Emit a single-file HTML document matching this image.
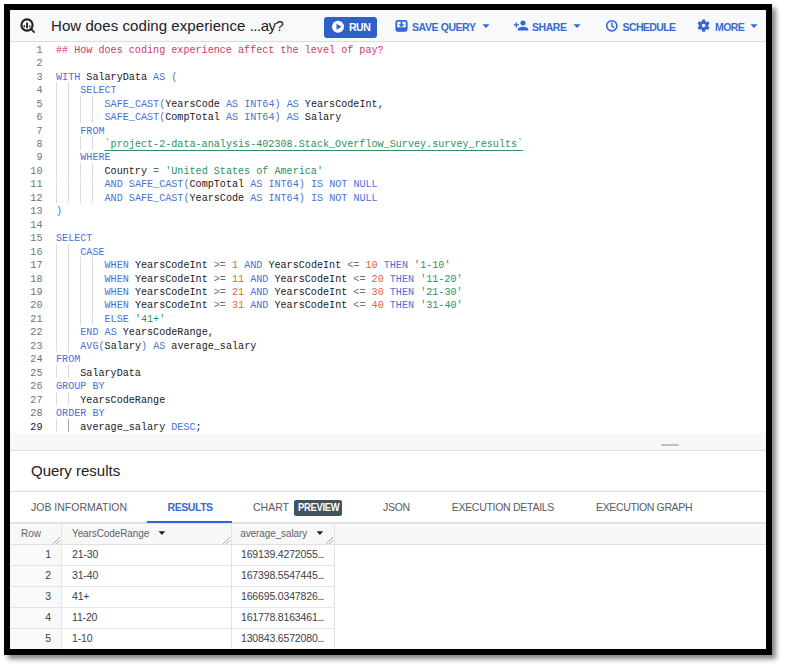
<!DOCTYPE html>
<html lang="en">
<head>
<meta charset="utf-8">
<title>How does coding experience affect the level of pay?</title>
<style>
*{box-sizing:border-box;margin:0;padding:0}
html,body{width:785px;height:668px;background:#fff;overflow:hidden}
body{position:relative;font-family:"Liberation Sans",sans-serif;color:#202124}
.frame{position:absolute;left:4px;top:4px;width:768px;height:651px;border:6px solid #000;background:transparent;z-index:10;box-shadow:4px 4px 5px rgba(0,0,0,.48)}
.abs{position:absolute}
.toolbar{left:10px;top:10px;width:756px;height:32px;background:#f8f9fa;border-bottom:1px solid #dadce0}
.title{left:51px;top:16px;font-size:15px;line-height:20px;color:#202124;white-space:nowrap;letter-spacing:-.05px}
.run{left:324px;top:17.3px;width:53.2px;height:20.4px;background:#2f60c8;border-radius:3px}
.tb{top:16.6px;height:20px;line-height:20px;font-size:10.5px;font-weight:bold;color:#3a69d2;white-space:nowrap;letter-spacing:-.1px}
.code{left:10px;top:42px;width:756px;height:391px;background:#fff;font-family:"Liberation Mono",monospace;font-size:10.12px;line-height:13.5px;color:#202124}
.ln{position:absolute;left:0;width:32.5px;text-align:right;color:#70757a;white-space:pre;height:13.5px}
.cl{position:absolute;left:46px;white-space:pre;height:13.5px}
.u{text-decoration:underline;text-underline-offset:2.6px;text-decoration-thickness:1px}
.k{color:#4a72d4}.c{color:#d2386a}.s{color:#2f8f62}.n{color:#e5604a}.p{color:#4a72d4}.o{color:#6a6e73}
.ln.act{color:#202124}
.g.act{background:#a0a4a8}
.g{position:absolute;width:1px;background:#dcdcdc}
.splitter{left:10px;top:433px;width:756px;height:18px;background:#f8f8f9;border-bottom:1px solid #dfe0e2}
.handle{left:661px;top:444px;width:18px;height:2px;background:#bdc1c6;border-radius:1px}
.qr{left:31px;top:461px;font-size:15px;line-height:20px;color:#202124;white-space:nowrap}
.tabs{left:10px;top:491px;width:756px;height:32px;border-top:1px solid #dadce0;border-bottom:1px solid #dadce0;background:#fff}
.tab{top:497px;height:20px;line-height:20px;font-size:10.5px;color:#565b60;white-space:nowrap}
.tab.on{color:#3a69d2;font-weight:bold}
.ul{left:147px;top:521.2px;width:84.5px;height:2px;background:#3367d6}
.badge{left:293.8px;top:499.5px;width:48.3px;height:16.2px;background:#42545f;border-radius:2px}
.badge span{position:absolute;left:4px;top:-1.9px;color:#fff;font-size:10px;font-weight:bold;line-height:20px;letter-spacing:-.3px;white-space:nowrap;transform:scaleX(.94);transform-origin:0 50%}
.thead{left:10px;top:523px;width:756px;height:22px;background:#f8f8f9;border-top:1px solid #e6e6e6;border-bottom:1px solid #e0e0e0}
.th{top:523.8px;height:20px;line-height:20px;font-size:10px;color:#5f6368;white-space:nowrap}
.cell{height:21px;line-height:20px;font-size:10.5px;color:#3c4043;white-space:nowrap;letter-spacing:-.16px}
.cell i{font-style:normal;letter-spacing:-1.05px}
.rowbg{left:10px;width:51px;height:21px;background:#f9f9fa}
.hl{left:10px;width:324px;height:1px;background:#e4e4e4}
.vl{width:1px;background:#e4e4e4}
</style>
</head>
<body>
<div class="abs toolbar"></div>
<svg class="abs" style="left:17px;top:15px" width="20" height="20" viewBox="0 0 20 20"><circle cx="10" cy="10" r="5.6" fill="none" stroke="#202124" stroke-width="2.1"/><path d="M14.2 14.2 L17.1 17.1" stroke="#202124" stroke-width="1.7" stroke-linecap="round"/><rect x="6.6" y="10" width="1.3" height="2.3" fill="#202124"/><rect x="9.1" y="7.6" width="1.9" height="5.6" fill="#202124"/><rect x="12.1" y="10.4" width="1.3" height="1.9" fill="#202124"/></svg>
<div class="abs title"><span style="letter-spacing:.07px">How does coding experience </span><span style="letter-spacing:-.5px">...ay?</span></div>
<div class="abs run"></div>
<svg class="abs" style="left:330px;top:19px" width="16" height="16" viewBox="0 0 16 16"><circle cx="8" cy="7.7" r="6" fill="#fff"/><path d="M6.5 4.7 L11.6 7.7 L6.5 10.7Z" fill="#2f60c8"/></svg>
<div class="abs tb" style="left:349px;color:#fff;letter-spacing:-.5px">RUN</div>
<svg class="abs" style="left:394px;top:18px" width="16" height="16" viewBox="0 0 16 16"><rect x="2.3" y="2.8" width="10.4" height="10" rx="1.5" fill="none" stroke="#3367d6" stroke-width="1.8"/><rect x="2.3" y="9.3" width="10.4" height="3.9" fill="#3367d6"/><path d="M6.6 3.6h1.8v2.6h2.1L7.5 9.2 4.5 6.2h2.1z" fill="#3367d6"/></svg>
<div class="abs tb" style="left:412px;letter-spacing:-.42px">SAVE QUERY</div>
<svg class="abs" style="left:482px;top:23.7px" width="8" height="5" viewBox="0 0 8 5"><path fill="#3367d6" d="M0.5 0.3h7L4 4z"/></svg>
<svg class="abs" style="left:513.3px;top:18.2px" width="16" height="15" viewBox="0 0 24 24" preserveAspectRatio="none"><path fill="#3367d6" d="M15 12c2.21 0 4-1.79 4-4s-1.79-4-4-4-4 1.79-4 4 1.79 4 4 4zm-9-2V7H4v3H1v2h3v3h2v-3h3v-2H6zm9 4c-2.67 0-8 1.34-8 4v2h16v-2c0-2.66-5.33-4-8-4z"/></svg>
<div class="abs tb" style="left:532px;letter-spacing:-.45px">SHARE</div>
<svg class="abs" style="left:572.6px;top:23.7px" width="8" height="5" viewBox="0 0 8 5"><path fill="#3367d6" d="M0.5 0.3h7L4 4z"/></svg>
<svg class="abs" style="left:604px;top:18px" width="16" height="16" viewBox="0 0 16 16"><circle cx="7.8" cy="7.8" r="5.1" fill="none" stroke="#3367d6" stroke-width="1.6"/><path d="M7.9 4.4V8.1L10.3 9.6" fill="none" stroke="#3367d6" stroke-width="1.4"/></svg>
<div class="abs tb" style="left:622.5px;letter-spacing:-.6px">SCHEDULE</div>
<svg class="abs" style="left:696.1px;top:18.3px" width="15.2" height="15.2" viewBox="0 0 24 24"><path fill="#3367d6" d="M19.14,12.94c0.04-0.3,0.06-0.61,0.06-0.94c0-0.32-0.02-0.64-0.07-0.94l2.03-1.58c0.18-0.14,0.23-0.41,0.12-0.61 l-1.92-3.32c-0.12-0.22-0.37-0.29-0.59-0.22l-2.39,0.96c-0.5-0.38-1.03-0.7-1.62-0.94L14.4,2.81c-0.04-0.24-0.24-0.41-0.48-0.41 h-3.84c-0.24,0-0.43,0.17-0.47,0.41L9.25,5.35C8.66,5.59,8.12,5.92,7.63,6.29L5.24,5.33c-0.22-0.08-0.47,0-0.59,0.22L2.74,8.87 C2.62,9.08,2.66,9.34,2.86,9.48l2.03,1.58C4.84,11.36,4.8,11.69,4.8,12s0.02,0.64,0.07,0.94l-2.03,1.58 c-0.18,0.14-0.23,0.41-0.12,0.61l1.92,3.32c0.12,0.22,0.37,0.29,0.59,0.22l2.39-0.96c0.5,0.38,1.03,0.7,1.62,0.94l0.36,2.54 c0.05,0.24,0.24,0.41,0.48,0.41h3.84c0.24,0,0.44-0.17,0.47-0.41l0.36-2.54c0.59-0.24,1.13-0.56,1.62-0.94l2.39,0.96 c0.22,0.08,0.47,0,0.59-0.22l1.92-3.32c0.12-0.22,0.07-0.47-0.12-0.61L19.14,12.94z M12,14.8c-1.55,0-2.8-1.25-2.8-2.8s1.25-2.8,2.8-2.8s2.8,1.25,2.8,2.8S13.55,14.8,12,14.8z"/></svg>
<div class="abs tb" style="left:715px;letter-spacing:-.6px">MORE</div>
<svg class="abs" style="left:750.4px;top:24px" width="8" height="5" viewBox="0 0 8 5"><path fill="#3367d6" d="M0.5 0.3h7L4 4z"/></svg>
<div class="abs code">
<div class="ln" style="top:1.7px">1</div>
<div class="cl" style="top:1.7px"><span class="c">## How does coding experience affect the level of pay?</span></div>
<div class="ln" style="top:15.2px">2</div>
<div class="ln" style="top:28.6px">3</div>
<div class="cl" style="top:28.6px"><span class="k">WITH</span> SalaryData <span class="k">AS</span> <span class="p">(</span></div>
<div class="ln" style="top:42.1px">4</div>
<div class="g" style="left:46.0px;top:40.3px;height:13.46px"></div>
<div class="g" style="left:58.1px;top:40.3px;height:13.46px"></div>
<div class="cl" style="top:42.1px">    <span class="k">SELECT</span></div>
<div class="ln" style="top:55.5px">5</div>
<div class="g" style="left:46.0px;top:53.7px;height:13.46px"></div>
<div class="g" style="left:58.1px;top:53.7px;height:13.46px"></div>
<div class="g" style="left:70.3px;top:53.7px;height:13.46px"></div>
<div class="g" style="left:82.4px;top:53.7px;height:13.46px"></div>
<div class="cl" style="top:55.5px">        <span class="k">SAFE_CAST</span><span class="p">(</span>YearsCode <span class="k">AS</span> <span class="k">INT64</span><span class="p">)</span> <span class="k">AS</span> YearsCodeInt,</div>
<div class="ln" style="top:69.0px">6</div>
<div class="g" style="left:46.0px;top:67.2px;height:13.46px"></div>
<div class="g" style="left:58.1px;top:67.2px;height:13.46px"></div>
<div class="g" style="left:70.3px;top:67.2px;height:13.46px"></div>
<div class="g" style="left:82.4px;top:67.2px;height:13.46px"></div>
<div class="cl" style="top:69.0px">        <span class="k">SAFE_CAST</span><span class="p">(</span>CompTotal <span class="k">AS</span> <span class="k">INT64</span><span class="p">)</span> <span class="k">AS</span> Salary</div>
<div class="ln" style="top:82.5px">7</div>
<div class="g" style="left:46.0px;top:80.7px;height:13.46px"></div>
<div class="g" style="left:58.1px;top:80.7px;height:13.46px"></div>
<div class="cl" style="top:82.5px">    <span class="k">FROM</span></div>
<div class="ln" style="top:95.9px">8</div>
<div class="g" style="left:46.0px;top:94.1px;height:13.46px"></div>
<div class="g" style="left:58.1px;top:94.1px;height:13.46px"></div>
<div class="g" style="left:70.3px;top:94.1px;height:13.46px"></div>
<div class="g" style="left:82.4px;top:94.1px;height:13.46px"></div>
<div class="cl" style="top:95.9px">        <span class="s u">`project-2-data-analysis-402308.Stack_Overflow_Survey.survey_results`</span></div>
<div class="ln" style="top:109.4px">9</div>
<div class="g" style="left:46.0px;top:107.6px;height:13.46px"></div>
<div class="g" style="left:58.1px;top:107.6px;height:13.46px"></div>
<div class="cl" style="top:109.4px">    <span class="k">WHERE</span></div>
<div class="ln" style="top:122.8px">10</div>
<div class="g" style="left:46.0px;top:121.0px;height:13.46px"></div>
<div class="g" style="left:58.1px;top:121.0px;height:13.46px"></div>
<div class="g" style="left:70.3px;top:121.0px;height:13.46px"></div>
<div class="g" style="left:82.4px;top:121.0px;height:13.46px"></div>
<div class="cl" style="top:122.8px">        Country <span class="o">=</span> <span class="s">&#x27;United States of America&#x27;</span></div>
<div class="ln" style="top:136.3px">11</div>
<div class="g" style="left:46.0px;top:134.5px;height:13.46px"></div>
<div class="g" style="left:58.1px;top:134.5px;height:13.46px"></div>
<div class="g" style="left:70.3px;top:134.5px;height:13.46px"></div>
<div class="g" style="left:82.4px;top:134.5px;height:13.46px"></div>
<div class="cl" style="top:136.3px">        <span class="k">AND</span> <span class="k">SAFE_CAST</span><span class="p">(</span>CompTotal <span class="k">AS</span> <span class="k">INT64</span><span class="p">)</span> <span class="k">IS</span> <span class="k">NOT</span> <span class="k">NULL</span></div>
<div class="ln" style="top:149.8px">12</div>
<div class="g" style="left:46.0px;top:148.0px;height:13.46px"></div>
<div class="g" style="left:58.1px;top:148.0px;height:13.46px"></div>
<div class="g" style="left:70.3px;top:148.0px;height:13.46px"></div>
<div class="g" style="left:82.4px;top:148.0px;height:13.46px"></div>
<div class="cl" style="top:149.8px">        <span class="k">AND</span> <span class="k">SAFE_CAST</span><span class="p">(</span>YearsCode <span class="k">AS</span> <span class="k">INT64</span><span class="p">)</span> <span class="k">IS</span> <span class="k">NOT</span> <span class="k">NULL</span></div>
<div class="ln" style="top:163.2px">13</div>
<div class="cl" style="top:163.2px"><span class="p">)</span></div>
<div class="ln" style="top:176.7px">14</div>
<div class="ln" style="top:190.1px">15</div>
<div class="cl" style="top:190.1px"><span class="k">SELECT</span></div>
<div class="ln" style="top:203.6px">16</div>
<div class="g" style="left:46.0px;top:201.8px;height:13.46px"></div>
<div class="g" style="left:58.1px;top:201.8px;height:13.46px"></div>
<div class="cl" style="top:203.6px">    <span class="k">CASE</span></div>
<div class="ln" style="top:217.1px">17</div>
<div class="g" style="left:46.0px;top:215.3px;height:13.46px"></div>
<div class="g" style="left:58.1px;top:215.3px;height:13.46px"></div>
<div class="g" style="left:70.3px;top:215.3px;height:13.46px"></div>
<div class="g" style="left:82.4px;top:215.3px;height:13.46px"></div>
<div class="cl" style="top:217.1px">        <span class="k">WHEN</span> YearsCodeInt <span class="o">&gt;=</span> <span class="n">1</span> <span class="k">AND</span> YearsCodeInt <span class="o">&lt;=</span> <span class="n">10</span> <span class="k">THEN</span> <span class="s">&#x27;1-10&#x27;</span></div>
<div class="ln" style="top:230.5px">18</div>
<div class="g" style="left:46.0px;top:228.7px;height:13.46px"></div>
<div class="g" style="left:58.1px;top:228.7px;height:13.46px"></div>
<div class="g" style="left:70.3px;top:228.7px;height:13.46px"></div>
<div class="g" style="left:82.4px;top:228.7px;height:13.46px"></div>
<div class="cl" style="top:230.5px">        <span class="k">WHEN</span> YearsCodeInt <span class="o">&gt;=</span> <span class="n">11</span> <span class="k">AND</span> YearsCodeInt <span class="o">&lt;=</span> <span class="n">20</span> <span class="k">THEN</span> <span class="s">&#x27;11-20&#x27;</span></div>
<div class="ln" style="top:244.0px">19</div>
<div class="g" style="left:46.0px;top:242.2px;height:13.46px"></div>
<div class="g" style="left:58.1px;top:242.2px;height:13.46px"></div>
<div class="g" style="left:70.3px;top:242.2px;height:13.46px"></div>
<div class="g" style="left:82.4px;top:242.2px;height:13.46px"></div>
<div class="cl" style="top:244.0px">        <span class="k">WHEN</span> YearsCodeInt <span class="o">&gt;=</span> <span class="n">21</span> <span class="k">AND</span> YearsCodeInt <span class="o">&lt;=</span> <span class="n">30</span> <span class="k">THEN</span> <span class="s">&#x27;21-30&#x27;</span></div>
<div class="ln" style="top:257.4px">20</div>
<div class="g" style="left:46.0px;top:255.6px;height:13.46px"></div>
<div class="g" style="left:58.1px;top:255.6px;height:13.46px"></div>
<div class="g" style="left:70.3px;top:255.6px;height:13.46px"></div>
<div class="g" style="left:82.4px;top:255.6px;height:13.46px"></div>
<div class="cl" style="top:257.4px">        <span class="k">WHEN</span> YearsCodeInt <span class="o">&gt;=</span> <span class="n">31</span> <span class="k">AND</span> YearsCodeInt <span class="o">&lt;=</span> <span class="n">40</span> <span class="k">THEN</span> <span class="s">&#x27;31-40&#x27;</span></div>
<div class="ln" style="top:270.9px">21</div>
<div class="g" style="left:46.0px;top:269.1px;height:13.46px"></div>
<div class="g" style="left:58.1px;top:269.1px;height:13.46px"></div>
<div class="g" style="left:70.3px;top:269.1px;height:13.46px"></div>
<div class="g" style="left:82.4px;top:269.1px;height:13.46px"></div>
<div class="cl" style="top:270.9px">        <span class="k">ELSE</span> <span class="s">&#x27;41+&#x27;</span></div>
<div class="ln" style="top:284.4px">22</div>
<div class="g" style="left:46.0px;top:282.6px;height:13.46px"></div>
<div class="g" style="left:58.1px;top:282.6px;height:13.46px"></div>
<div class="cl" style="top:284.4px">    <span class="k">END</span> <span class="k">AS</span> YearsCodeRange,</div>
<div class="ln" style="top:297.8px">23</div>
<div class="g" style="left:46.0px;top:296.0px;height:13.46px"></div>
<div class="g" style="left:58.1px;top:296.0px;height:13.46px"></div>
<div class="cl" style="top:297.8px">    <span class="k">AVG</span><span class="p">(</span>Salary<span class="p">)</span> <span class="k">AS</span> average_salary</div>
<div class="ln" style="top:311.3px">24</div>
<div class="cl" style="top:311.3px"><span class="k">FROM</span></div>
<div class="ln" style="top:324.7px">25</div>
<div class="g" style="left:46.0px;top:322.9px;height:13.46px"></div>
<div class="g" style="left:58.1px;top:322.9px;height:13.46px"></div>
<div class="cl" style="top:324.7px">    SalaryData</div>
<div class="ln" style="top:338.2px">26</div>
<div class="cl" style="top:338.2px"><span class="k">GROUP</span> <span class="k">BY</span></div>
<div class="ln" style="top:351.7px">27</div>
<div class="g" style="left:46.0px;top:349.9px;height:13.46px"></div>
<div class="g" style="left:58.1px;top:349.9px;height:13.46px"></div>
<div class="cl" style="top:351.7px">    YearsCodeRange</div>
<div class="ln" style="top:365.1px">28</div>
<div class="cl" style="top:365.1px"><span class="k">ORDER</span> <span class="k">BY</span></div>
<div class="ln act" style="top:378.6px">29</div>
<div class="g" style="left:46.0px;top:376.8px;height:13.46px"></div>
<div class="g act" style="left:58.1px;top:376.8px;height:13.46px"></div>
<div class="cl" style="top:378.6px">    average_salary <span class="k">DESC</span>;</div>
</div>
<div class="abs splitter"></div>
<div class="abs handle"></div>
<div class="abs qr">Query results</div>
<div class="abs tabs"></div>
<div class="abs tab" style="left:31px">JOB INFORMATION</div>
<div class="abs tab on" style="left:167.6px;letter-spacing:-.45px">RESULTS</div>
<div class="abs ul"></div>
<div class="abs tab" style="left:253px">CHART</div>
<div class="abs badge"><span>PREVIEW</span></div>
<div class="abs tab" style="left:383px;letter-spacing:-.3px">JSON</div>
<div class="abs tab" style="left:451.7px;letter-spacing:-.28px">EXECUTION DETAILS</div>
<div class="abs tab" style="left:596px;letter-spacing:-.36px">EXECUTION GRAPH</div>
<div class="abs thead"></div>
<div class="abs th" style="left:21px">Row</div>
<div class="abs th" style="left:72px;letter-spacing:-.1px">YearsCodeRange</div>
<div class="abs th" style="left:240.2px;letter-spacing:-.1px">average_salary</div>
<div class="abs vl" style="left:61px;top:523px;height:126px"></div>
<div class="abs vl" style="left:231px;top:523px;height:126px"></div>
<div class="abs vl" style="left:334px;top:523px;height:126px"></div>
<svg class="abs" style="left:157.5px;top:531px" width="8" height="5" viewBox="0 0 8 5"><path fill="#202124" d="M0.6 0.3h6.6L3.9 3.9z"/></svg>
<svg class="abs" style="left:316px;top:531px" width="8" height="5" viewBox="0 0 8 5"><path fill="#202124" d="M0.6 0.3h6.6L3.9 3.9z"/></svg>
<svg class="abs" style="left:52px;top:536px" width="9" height="9" viewBox="0 0 9 9"><path d="M1 8L8 1M4.2 8L8 4.2" stroke="#9aa0a6" stroke-width=".9" fill="none"/></svg>
<svg class="abs" style="left:222px;top:536px" width="9" height="9" viewBox="0 0 9 9"><path d="M1 8L8 1M4.2 8L8 4.2" stroke="#9aa0a6" stroke-width=".9" fill="none"/></svg>
<svg class="abs" style="left:325px;top:536px" width="9" height="9" viewBox="0 0 9 9"><path d="M1 8L8 1M4.2 8L8 4.2" stroke="#9aa0a6" stroke-width=".9" fill="none"/></svg>
<div class="abs rowbg" style="top:545px"></div>
<div class="abs cell" style="left:10px;width:41px;text-align:right;top:544px">1</div>
<div class="abs cell" style="left:72px;top:544px">21-30</div>
<div class="abs cell" style="left:241px;top:544px">169139.4272055<i>...</i></div>
<div class="abs hl" style="top:565px"></div>
<div class="abs rowbg" style="top:566px"></div>
<div class="abs cell" style="left:10px;width:41px;text-align:right;top:565px">2</div>
<div class="abs cell" style="left:72px;top:565px">31-40</div>
<div class="abs cell" style="left:241px;top:565px">167398.5547445<i>...</i></div>
<div class="abs hl" style="top:586px"></div>
<div class="abs rowbg" style="top:587px"></div>
<div class="abs cell" style="left:10px;width:41px;text-align:right;top:586px">3</div>
<div class="abs cell" style="left:72px;top:586px">41+</div>
<div class="abs cell" style="left:241px;top:586px">166695.0347826<i>...</i></div>
<div class="abs hl" style="top:607px"></div>
<div class="abs rowbg" style="top:608px"></div>
<div class="abs cell" style="left:10px;width:41px;text-align:right;top:607px">4</div>
<div class="abs cell" style="left:72px;top:607px">11-20</div>
<div class="abs cell" style="left:241px;top:607px">161778.8163461<i>...</i></div>
<div class="abs hl" style="top:628px"></div>
<div class="abs rowbg" style="top:629px"></div>
<div class="abs cell" style="left:10px;width:41px;text-align:right;top:628px">5</div>
<div class="abs cell" style="left:72px;top:628px">1-10</div>
<div class="abs cell" style="left:241px;top:628px">130843.6572080<i>...</i></div>
<div class="frame"></div>
</body>
</html>
